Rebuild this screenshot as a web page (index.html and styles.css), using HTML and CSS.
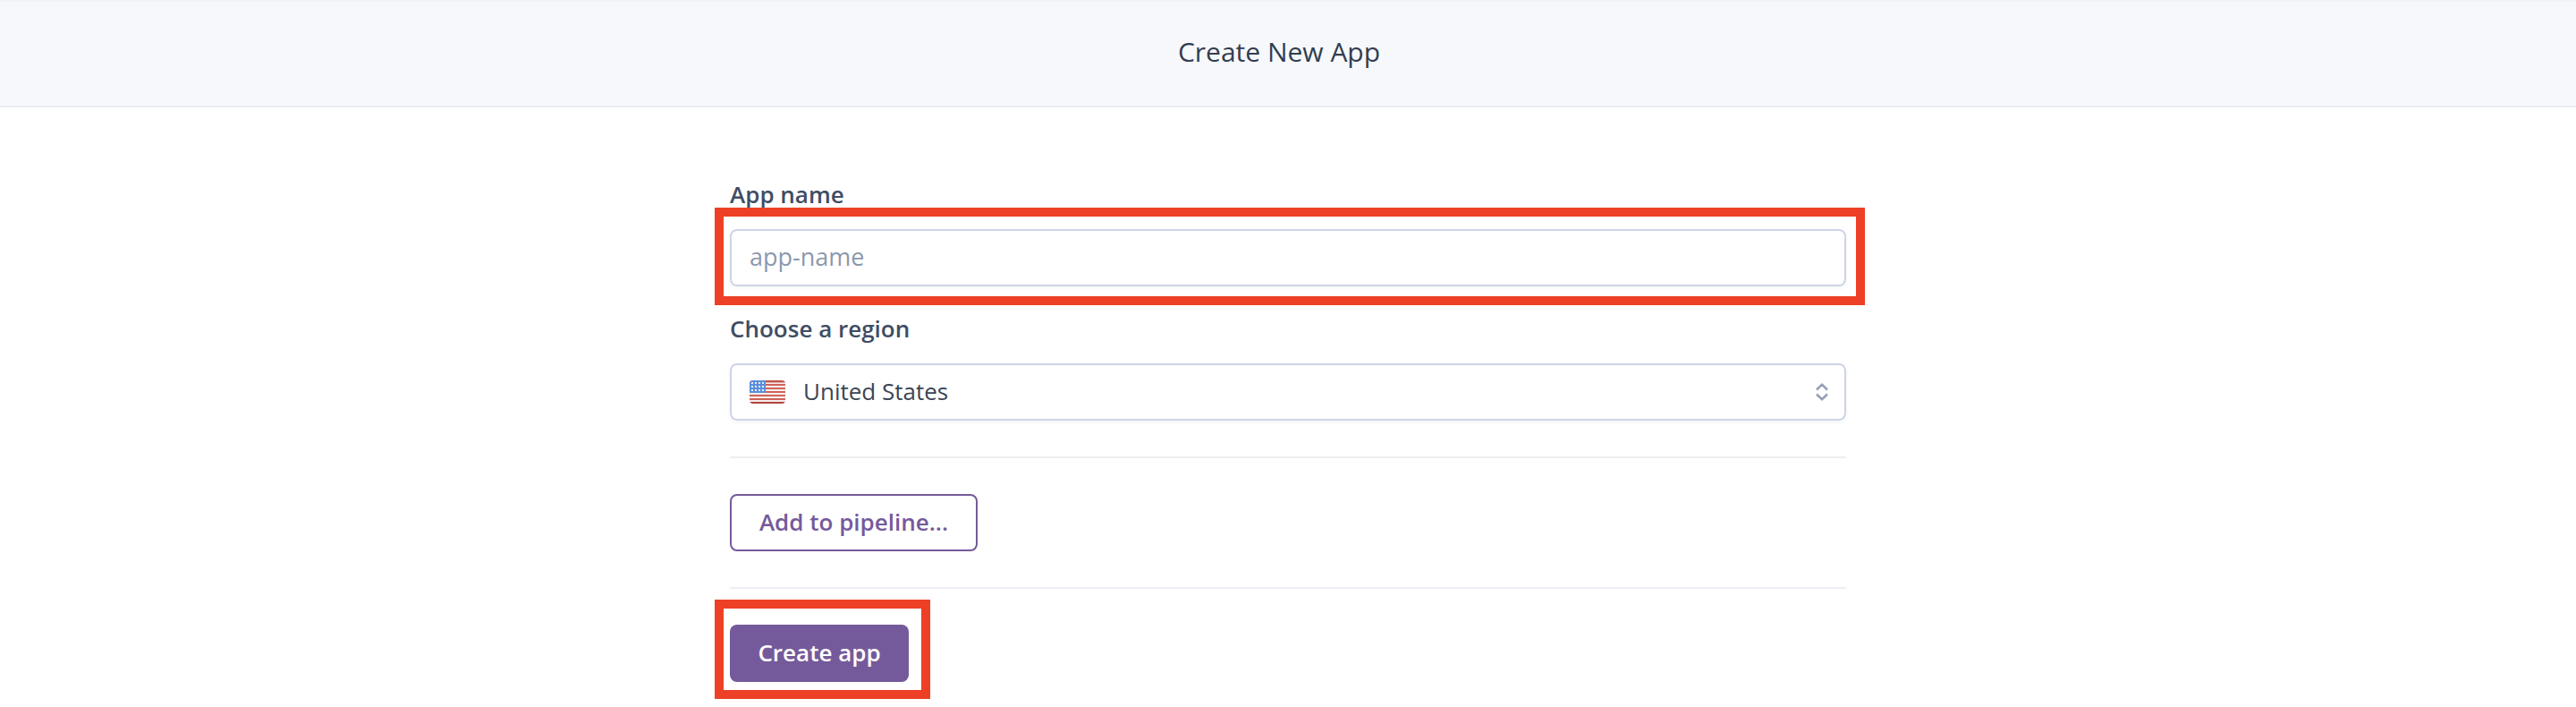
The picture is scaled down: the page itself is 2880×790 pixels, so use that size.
FILE: index.html
```html
<!DOCTYPE html>
<html lang="en">

<head>
    <meta charset="UTF-8">
    <meta name="viewport" content="width=device-width, initial-scale=1.0">
    <title>Create New App</title>
    <link rel="stylesheet" href="styles.css">
</head>

<body>
    <header class="page-header">
        <h1>Create New App</h1>
    </header>
    <form class="app-form">
        <label class="field-label label-name" for="app-name">App name</label>
        <div class="marked">
            <input class="text-input" id="app-name" type="text" placeholder="app-name">
            <span class="marker marker-input"></span>
        </div>
        <label class="field-label label-region">Choose a region</label>
        <div class="region-select">
            <svg class="flag" width="40" height="26" viewBox="0 0 40 26">
                <defs>
                    <clipPath id="flag-clip">
                        <rect width="40" height="26" rx="4" />
                    </clipPath>
                </defs>
                <g clip-path="url(#flag-clip)">
                    <rect width="40" height="26" fill="#f6eeec" />
                    <rect y="0" width="40" height="2.4" fill="#c2544a" />
                    <rect y="4" width="40" height="2" fill="#d0645a" />
                    <rect y="8" width="40" height="2" fill="#d0645a" />
                    <rect y="12" width="40" height="2" fill="#d0645a" />
                    <rect y="16" width="40" height="2" fill="#d0645a" />
                    <rect y="20" width="40" height="2" fill="#cf6258" />
                    <rect y="24" width="40" height="2" fill="#b0443c" />
                    <rect width="18" height="14" fill="#5b8fdc" />
                    <g fill="#e4edfa">
                        <rect x="2" y="2" width="2" height="2" />
                        <rect x="6" y="2" width="2" height="2" />
                        <rect x="10" y="2" width="2" height="2" />
                        <rect x="14" y="2" width="2" height="2" />
                        <rect x="2" y="6" width="2" height="2" />
                        <rect x="6" y="6" width="2" height="2" />
                        <rect x="10" y="6" width="2" height="2" />
                        <rect x="14" y="6" width="2" height="2" />
                        <rect x="2" y="10" width="2" height="2" />
                        <rect x="6" y="10" width="2" height="2" />
                        <rect x="10" y="10" width="2" height="2" />
                        <rect x="14" y="10" width="2" height="2" />
                    </g>
                </g>
            </svg>
            <span class="region-name">United States</span>
            <svg class="chevrons" width="14" height="20" viewBox="0 0 14 20" fill="none" stroke="#95a0b4" stroke-width="2.6">
                <path d="M1 7.5 7 1.8l6 5.7" />
                <path d="M1 12.5l6 5.7 6-5.7" />
            </svg>
        </div>
        <hr class="rule rule-top">
        <button class="btn btn-outline" type="button">Add to pipeline...</button>
        <hr class="rule rule-bottom">
        <div class="marked marked-button">
            <button class="btn btn-primary" type="button">Create app</button>
            <span class="marker marker-button"></span>
        </div>
    </form>
</body>

</html>
```

FILE: styles.css
```css
* {
    box-sizing: border-box;
}

body {
    margin: 0;
    min-height: 790px;
    background: #fff;
    font-family: "Open Sans", "Noto Sans", sans-serif;
    color: #3f4d63;
}

.page-header {
    height: 120px;
    padding: 0 20px 6px 0;
    background: #f7f8fb;
    border-top: 2px solid #f1f2f5;
    border-bottom: 2px solid #e8ebf1;
    display: flex;
    align-items: center;
    justify-content: center;
}

.page-header h1 {
    margin: 0;
    font-size: 30px;
    font-weight: 400;
    color: #323e50;
}

.app-form {
    width: 1248px;
    margin: 0 auto;
    display: flex;
    flex-direction: column;
    align-items: stretch;
}

.field-label {
    display: block;
    height: 38px;
    line-height: 38px;
    font-size: 26px;
    font-weight: 600;
    color: #3f4d63;
}

.label-name {
    margin-top: 78px;
    margin-bottom: 20px;
}

.label-region {
    margin-top: 28px;
    margin-bottom: 20px;
}

.marked {
    position: relative;
}

.marked-button {
    align-self: flex-start;
    margin-top: 40px;
}

.marker {
    position: absolute;
    border: 10px solid #ed4026;
    pointer-events: none;
}

.marker-input {
    top: -24px;
    right: -21px;
    bottom: -21px;
    left: -17px;
}

.marker-button {
    top: -28px;
    right: -24px;
    bottom: -19px;
    left: -17px;
}

.text-input {
    display: block;
    width: 100%;
    height: 64px;
    padding: 0 20px 3px;
    border: 2px solid #cdd5e5;
    border-radius: 8px;
    background: #fff;
    font-family: inherit;
    font-size: 27px;
    box-shadow: 0 2px 4px rgba(60, 80, 120, 0.06);
    outline: none;
}

.text-input::placeholder {
    color: #8c98ae;
    opacity: 1;
}

.region-select {
    height: 64px;
    padding: 0 18px 0 20px;
    border: 2px solid #cdd5e5;
    border-radius: 8px;
    display: flex;
    align-items: center;
    box-shadow: 0 2px 4px rgba(60, 80, 120, 0.06);
}

.region-name {
    margin-left: 20px;
    padding-bottom: 3px;
    font-size: 26px;
    color: #3b4555;
}

.chevrons {
    margin-left: auto;
}

.rule {
    width: 100%;
    height: 2px;
    margin: 0;
    border: none;
    background: #eeeff4;
}

.rule-top {
    margin-top: 40px;
}

.rule-bottom {
    margin-top: 40px;
}

.btn {
    height: 64px;
    border-radius: 8px;
    font-family: inherit;
    font-size: 26px;
    font-weight: 600;
    padding: 0 0 3px;
}

.btn-outline {
    align-self: flex-start;
    width: 277px;
    margin-top: 40px;
    background: #fff;
    color: #755a9b;
    border: 2px solid #755a9b;
}

.btn-primary {
    display: block;
    width: 200px;
    background: #755a9b;
    color: #fff;
    border: none;
}
```
